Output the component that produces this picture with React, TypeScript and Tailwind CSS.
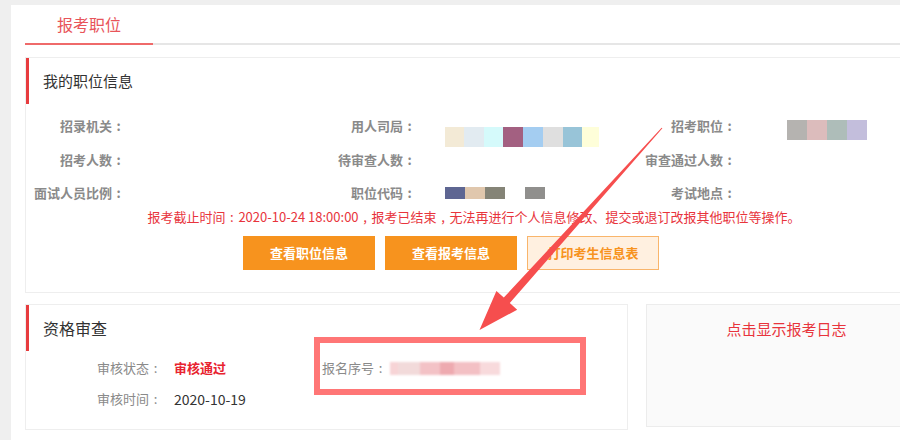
import React from "react";

const Sw = ({ colors, h, gapAfter }: { colors: string[]; h: number; gapAfter?: number }) => (
  <div className="flex">
    {colors.map((c, i) => (
      <div
        key={i}
        style={{ background: c, height: h, width: 20, marginLeft: gapAfter !== undefined && i === gapAfter ? 20 : 0 }}
      />
    ))}
  </div>
);

const Colon = () => <span className="inline-block w-[13px] text-center">:</span>;

export default function App() {
  const label = "text-right text-[13px] font-bold text-[#8a8a8a] leading-[32px]";
  return (
    <div className="relative w-[900px] h-[440px] overflow-hidden bg-[#efefef] font-['Noto_Sans_CJK_SC','Liberation_Sans',sans-serif]">
      <div className="ml-[11px] mt-[5px] w-[930px] h-[435px] bg-white px-[14px]">
        {/* tab */}
        <div className="flex h-[38px]">
          <div className="w-[128px] flex items-center justify-center text-[16px] text-[#e8545a]">报考职位</div>
        </div>
        <div className="flex h-[2px] bg-[#e6e6e6]">
          <div className="w-[128px] bg-[#ef6a6a]" />
        </div>

        {/* section 1 */}
        <div className="mt-[12px] h-[236px] border border-[#eeeeee]">
          <div className="h-[46px] flex items-center border-l-[3px] border-[#e73c3e] pl-[14px] text-[15px] text-[#333]">
            我的职位信息
          </div>
          <div className="mt-[6px] flex h-[32px]">
            <div className={`w-[99px] ${label}`}>招录机关<Colon /></div>
            <div className="w-[211px]" />
            <div className={`w-[80px] ${label}`}>用人司局<Colon /></div>
            <div className="w-[183px] pl-[29px] pt-[17px]">
              <div className="flex">
                {["#f3ead6", "#e2ebf1", "#d5fafb", "#a36081", "#a4cdf1", "#dfdfdf", "#98c4d8", "#fefed9"].map((c, i) => (
                  <div key={i} style={{ background: c }} className={`h-[20px] ${i === 7 ? "w-[17px]" : i === 0 ? "w-[19px]" : "w-[20px]"}`} />
                ))}
              </div>
            </div>
            <div className={`w-[137px] ${label}`}>招考职位<Colon /></div>
            <div className="flex-1 pl-[51px] pt-[10px]">
              <Sw colors={["#b5b3b0", "#dcbcbc", "#aebdb9", "#c3bedc"]} h={20} />
            </div>
          </div>
          <div className="mt-[2px] flex h-[32px]">
            <div className={`w-[99px] ${label}`}>招考人数<Colon /></div>
            <div className="w-[211px]" />
            <div className={`w-[80px] ${label}`}>待审查人数<Colon /></div>
            <div className="w-[183px]" />
            <div className={`w-[137px] ${label}`}>审查通过人数<Colon /></div>
            <div className="flex-1" />
          </div>
          <div className="mt-[1px] flex h-[30px]">
            <div className={`w-[99px] ${label} leading-[30px]`}>面试人员比例<Colon /></div>
            <div className="w-[211px]" />
            <div className={`w-[80px] ${label} leading-[30px]`}>职位代码<Colon /></div>
            <div className="w-[183px] pl-[29px] pt-[10px]">
              <Sw colors={["#5e6692", "#e0c7ad", "#858477", "#908f8d"]} h={12} gapAfter={3} />
            </div>
            <div className={`w-[137px] ${label} leading-[30px]`}>考试地点<Colon /></div>
            <div className="flex-1" />
          </div>
          <div className="h-[20px] pr-[4px] text-center text-[13px] leading-[20px] text-[#e8343c]">
            报考截止时间<Colon />2020-10-24 18:00:00<span className="inline-block w-[13px] text-center">,</span>报考已结束<span className="inline-block w-[13px] text-center">,</span>无法再进行个人信息修改、提交或退订改报其他职位等操作。
          </div>
          <div className="mt-[9px] flex gap-[10px] pl-[217px]">
            <div className="w-[132px] h-[34px] flex items-center justify-center bg-[#f7931e] text-white text-[13px] font-bold">查看职位信息</div>
            <div className="w-[132px] h-[34px] flex items-center justify-center bg-[#f7931e] text-white text-[13px] font-bold">查看报考信息</div>
            <div className="w-[132px] h-[34px] flex items-center justify-center bg-[#fff0e0] border border-[#f9b56b] text-[#f7931e] text-[13px] font-bold">打印考生信息表</div>
          </div>
        </div>

        {/* section 2 */}
        <div className="mt-[11px] flex gap-[18px]">
          <div className="w-[603px] h-[126px] border border-[#eeeeee]">
            <div className="h-[46px] flex items-center border-l-[3px] border-[#e73c3e] pl-[14px] text-[16px] text-[#333]">
              资格审查
            </div>
            <div className="mt-[2px] flex h-[30px] items-center pl-[71px] text-[13px]">
              <div className="w-[77px] text-[#8a8a8a]">审核状态<Colon /></div>
              <div className="w-[148px] font-bold text-[#e8232f]">审核通过</div>
              <div className="w-[68px] text-[#8a8a8a]">报名序号<Colon /></div>
              <div className="relative flex h-[13px] blur-[1px]">
                <div className="w-[8px] bg-[#f7d4d6]" />
                <div className="w-[22px] bg-[#f2dada]" />
                <div className="w-[20px] bg-[#f3c2c6]" />
                <div className="w-[14px] bg-[#eeaab0]" />
                <div className="w-[26px] bg-[#f3c0c4]" />
                <div className="w-[20px] bg-[#f8dadc]" />
              </div>
            </div>
            <div className="mt-[1px] flex h-[30px] items-center pl-[71px]">
              <div className="w-[77px] text-[13px] text-[#8a8a8a]">审核时间<Colon /></div>
              <div className="text-[14px] text-[#333]">2020-10-19</div>
            </div>
          </div>
          <div className="flex-1 h-[123px] border border-[#ececec] bg-[#fafafa] pt-[13px] text-center text-[15px] leading-[22px] text-[#e8343c]">
            点击显示报考日志
          </div>
        </div>
      </div>

      {/* highlight box */}
      <div className="absolute left-[314px] top-[337px] w-[272px] h-[58px] border-[6px] border-[#ff7676]" />

      {/* arrow */}
      <svg className="absolute left-0 top-0 pointer-events-none" width="900" height="440" viewBox="0 0 900 440">
        <polygon
          points="662.4,128.3 661.6,127.7 503.8,297.6 496.4,290.9 479.5,330 517.2,309.7 509.8,303"
          fill="#f64e4e"
        />
      </svg>
    </div>
  );
}
